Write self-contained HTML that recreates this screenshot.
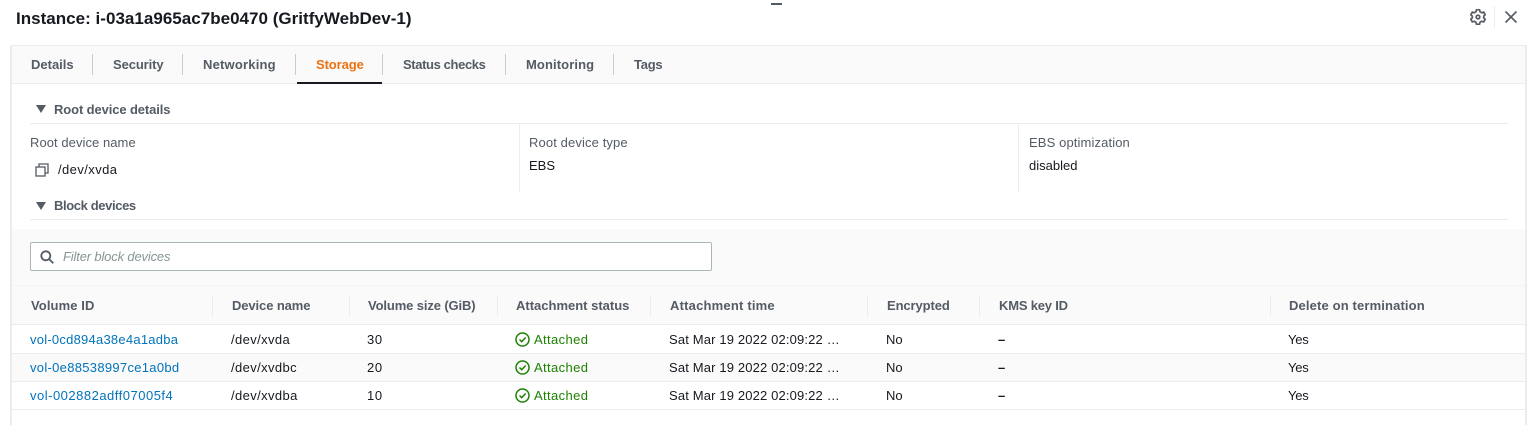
<!DOCTYPE html>
<html><head><meta charset="utf-8">
<style>
html,body{margin:0;padding:0;background:#fff;}
#p{position:relative;width:1536px;height:425px;overflow:hidden;background:#fff;font-family:"Liberation Sans",sans-serif;font-size:13px;color:#16191f;filter:blur(0.25px);}
.a{position:absolute;white-space:nowrap;line-height:16px;}
.b{position:absolute;}
.tab{font-weight:700;color:#545b64;font-size:13px;top:57px;}
.sep{position:absolute;top:54px;height:21px;width:1px;background:#c8cccc;}
.h{font-weight:700;color:#545b64;top:298px;}
.hs{position:absolute;top:296px;height:20px;width:1px;background:#eaeded;}
.l{color:#545b64;}
.lk{color:#0073bb;}
.g{color:#1d8102;letter-spacing:.38px;}
.d{letter-spacing:.15px;}
.v{letter-spacing:.38px;}
.n{letter-spacing:.7px;}
</style></head><body>
<div id="p">
<div class="a" style="left:16px;top:9px;font-size:17px;line-height:20px;font-weight:700;letter-spacing:.02px;">Instance: i-03a1a965ac7be0470 (GritfyWebDev-1)</div>
<div class="b" style="left:771px;top:3px;width:11px;height:2px;background:#545b64;"></div>
<svg class="b" style="left:1470px;top:9px" width="16" height="16" viewBox="0 0 16 16" fill="none" stroke="#545b64" stroke-width="1.7"><path d="M6.500 1.200h3l.5 2 1.700 1 2-.6 1.500 2.600-1.500 1.400v1.800l1.500 1.400-1.500 2.600-2-.6-1.700 1-.5 2h-3l-.5-2-1.700-1-2 .6L.8 10.800l1.500-1.400V7.600L.8 6.200l1.500-2.600 2 .6 1.700-1z" transform="translate(0 -.5)"/><circle cx="8" cy="8" r="1.800"/></svg>
<div class="b" style="left:1494px;top:6px;width:1px;height:22px;background:#eaeded;"></div>
<svg class="b" style="left:1504px;top:10px" width="14" height="14" viewBox="0 0 14 14" stroke="#545b64" stroke-width="1.600" fill="none"><path d="M1.500 1.500l11 11M12.500 1.500l-11 11"/></svg>

<div class="b" style="left:10px;top:45px;width:1517px;height:380px;border:1px solid #eaeded;border-bottom:0;box-sizing:border-box;border-left-width:2px;border-right-width:2px;"></div>
<div class="b" style="left:12px;top:46px;width:1513px;height:37px;background:#fafafa;border-bottom:1px solid #eaeded;"></div>

<div class="a tab" style="left:31px;">Details</div>
<div class="sep" style="left:92px;"></div>
<div class="a tab" style="left:113px;letter-spacing:-.1px;">Security</div>
<div class="sep" style="left:182px;"></div>
<div class="a tab" style="left:203px;letter-spacing:.2px;">Networking</div>
<div class="sep" style="left:295px;"></div>
<div class="a tab" style="left:316px;color:#ec7211;letter-spacing:-.1px;">Storage</div>
<div class="b" style="left:297px;top:82px;width:85px;height:2px;background:#16191f;"></div>
<div class="sep" style="left:382px;"></div>
<div class="a tab" style="left:403px;letter-spacing:-.38px;">Status checks</div>
<div class="sep" style="left:505px;"></div>
<div class="a tab" style="left:526px;letter-spacing:.1px;">Monitoring</div>
<div class="sep" style="left:613px;"></div>
<div class="a tab" style="left:634px;letter-spacing:-.25px;">Tags</div>

<svg class="b" style="left:36px;top:105px" width="10" height="8" viewBox="0 0 10 8"><path d="M0 0h10L5 8z" fill="#545b64"/></svg>
<div class="a" style="left:54px;top:102px;font-weight:700;color:#545b64;letter-spacing:-.11px;">Root device details</div>
<div class="b" style="left:30px;top:123px;width:1478px;height:1px;background:#eaeded;"></div>

<div class="a l" style="left:30px;top:135px;letter-spacing:.06px;">Root device name</div>
<svg class="b" style="left:35px;top:163px" width="14" height="14" viewBox="0 0 14 14" fill="none" stroke="#545b64" stroke-width="1.300"><rect x="1" y="4" width="9" height="9" fill="#fff"/><path d="M4 4V1h9v9h-3"/></svg>
<div class="a" style="left:58px;top:162px;letter-spacing:.42px;">/dev/xvda</div>
<div class="b" style="left:519px;top:124px;width:1px;height:68px;background:#eaeded;"></div>
<div class="a l" style="left:529px;top:135px;letter-spacing:.12px;">Root device type</div>
<div class="a" style="left:529px;top:158px;">EBS</div>
<div class="b" style="left:1018px;top:124px;width:1px;height:68px;background:#eaeded;"></div>
<div class="a l" style="left:1029px;top:135px;letter-spacing:.12px;">EBS optimization</div>
<div class="a" style="left:1029px;top:158px;">disabled</div>

<svg class="b" style="left:36px;top:202px" width="10" height="8" viewBox="0 0 10 8"><path d="M0 0h10L5 8z" fill="#545b64"/></svg>
<div class="a" style="left:54px;top:198px;font-weight:700;color:#545b64;letter-spacing:-.38px;">Block devices</div>
<div class="b" style="left:30px;top:219px;width:1478px;height:1px;background:#eaeded;"></div>

<div class="b" style="left:12px;top:229px;width:1513px;height:96px;background:#fafafa;"></div>
<div class="b" style="left:12px;top:285px;width:1513px;height:40px;border-top:1px solid #f2f3f3;border-bottom:1px solid #eaeded;box-sizing:border-box;"></div>
<div class="b" style="left:30px;top:242px;width:682px;height:29px;background:#fff;border:1px solid #aab7b8;border-radius:2px;box-sizing:border-box;"></div>
<svg class="b" style="left:40px;top:250px" width="14" height="14" viewBox="0 0 14 14" fill="none" stroke="#545b64" stroke-width="1.800"><circle cx="5.800" cy="5.800" r="4.500"/><path d="M9 9l4.300 4.300"/></svg>
<div class="a" style="left:63px;top:249px;font-style:italic;color:#879596;letter-spacing:-.16px;">Filter block devices</div>

<div class="a h" style="left:31px;letter-spacing:.1px;">Volume ID</div><div class="hs" style="left:212px;"></div>
<div class="a h" style="left:232px;letter-spacing:-.1px;">Device name</div><div class="hs" style="left:349px;"></div>
<div class="a h" style="left:368px;letter-spacing:-.12px;">Volume size (GiB)</div><div class="hs" style="left:497px;"></div>
<div class="a h" style="left:516px;">Attachment status</div><div class="hs" style="left:650px;"></div>
<div class="a h" style="left:670px;letter-spacing:.2px;">Attachment time</div><div class="hs" style="left:867px;"></div>
<div class="a h" style="left:887px;letter-spacing:-.1px;">Encrypted</div><div class="hs" style="left:979px;"></div>
<div class="a h" style="left:999px;letter-spacing:-.2px;">KMS key ID</div><div class="hs" style="left:1270px;"></div>
<div class="a h" style="left:1289px;letter-spacing:.14px;">Delete on termination</div>

<div class="b" style="left:12px;top:353px;width:1513px;height:28px;background:#fafafa;"></div>
<div class="b" style="left:12px;top:353px;width:1513px;height:1px;background:#eaeded;"></div>
<div class="b" style="left:12px;top:381px;width:1513px;height:1px;background:#eaeded;"></div>
<div class="b" style="left:12px;top:409px;width:1513px;height:1px;background:#eaeded;"></div>

<div class="a lk" style="left:30px;top:332px;letter-spacing:.24px;">vol-0cd894a38e4a1adba</div>
<div class="a v" style="left:231px;top:332px;">/dev/xvda</div>
<div class="a n" style="left:367px;top:332px;">30</div>
<svg class="b" style="left:515px;top:332px" width="15" height="15" viewBox="0 0 15 15" fill="none" stroke="#1d8102" stroke-width="1.500"><circle cx="7.500" cy="7.500" r="6.500"/><path d="M4.500 7.500l2.200 2.200 4-4.200"/></svg>
<div class="a g" style="left:534px;top:332px;">Attached</div>
<div class="a d" style="left:669px;top:332px;">Sat Mar 19 2022 02:09:22 …</div>
<div class="a" style="left:886px;top:332px;">No</div>
<div class="a" style="left:998px;top:332px;font-weight:700;">–</div>
<div class="a" style="left:1288px;top:332px;letter-spacing:-.2px;">Yes</div>

<div class="a lk" style="left:30px;top:360px;letter-spacing:.3px;">vol-0e88538997ce1a0bd</div>
<div class="a v" style="left:231px;top:360px;">/dev/xvdbc</div>
<div class="a n" style="left:367px;top:360px;">20</div>
<svg class="b" style="left:515px;top:360px" width="15" height="15" viewBox="0 0 15 15" fill="none" stroke="#1d8102" stroke-width="1.500"><circle cx="7.500" cy="7.500" r="6.500"/><path d="M4.500 7.500l2.200 2.200 4-4.200"/></svg>
<div class="a g" style="left:534px;top:360px;">Attached</div>
<div class="a d" style="left:669px;top:360px;">Sat Mar 19 2022 02:09:22 …</div>
<div class="a" style="left:886px;top:360px;">No</div>
<div class="a" style="left:998px;top:360px;font-weight:700;">–</div>
<div class="a" style="left:1288px;top:360px;letter-spacing:-.2px;">Yes</div>

<div class="a lk" style="left:30px;top:388px;letter-spacing:.5px;">vol-002882adff07005f4</div>
<div class="a v" style="left:231px;top:388px;">/dev/xvdba</div>
<div class="a n" style="left:367px;top:388px;">10</div>
<svg class="b" style="left:515px;top:388px" width="15" height="15" viewBox="0 0 15 15" fill="none" stroke="#1d8102" stroke-width="1.500"><circle cx="7.500" cy="7.500" r="6.500"/><path d="M4.500 7.500l2.200 2.200 4-4.200"/></svg>
<div class="a g" style="left:534px;top:388px;">Attached</div>
<div class="a d" style="left:669px;top:388px;">Sat Mar 19 2022 02:09:22 …</div>
<div class="a" style="left:886px;top:388px;">No</div>
<div class="a" style="left:998px;top:388px;font-weight:700;">–</div>
<div class="a" style="left:1288px;top:388px;letter-spacing:-.2px;">Yes</div>
</div>
</body></html>
